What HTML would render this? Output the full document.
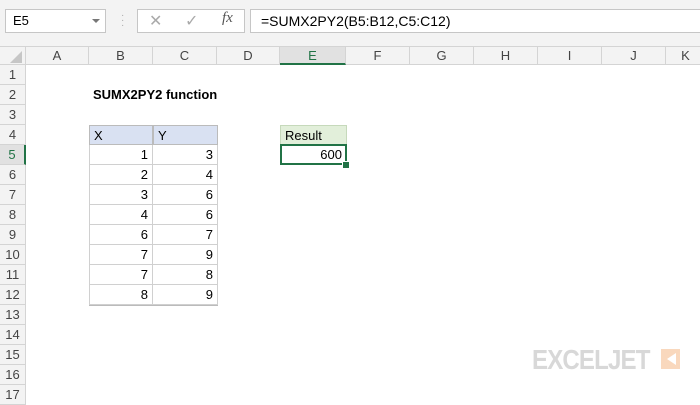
<!DOCTYPE html><html><head><style>
body{margin:0;width:700px;height:400px;overflow:hidden;background:#fff;font-family:"Liberation Sans",Arial,sans-serif;font-size:13px;position:relative}
.a{position:absolute}
.ch{position:absolute;top:47px;height:18px;background:#f3f3f3;border-right:1px solid #d4d4d4;border-bottom:1px solid #d4d4d4;text-align:center;line-height:18px;color:#444;box-sizing:border-box}
.rh{position:absolute;left:0;width:26px;height:20px;background:#f3f3f3;border-bottom:1px solid #d4d4d4;border-right:1px solid #d4d4d4;box-sizing:border-box;text-align:center;line-height:20px;color:#444}
.c{position:absolute;height:20px;line-height:20px;box-sizing:border-box;padding:0 4px}
</style></head><body>
<div class="a" style="left:0;top:0;width:700px;height:46px;background:#f3f3f3;border-bottom:1px solid #d4d4d4"></div>
<div class="a" style="left:5px;top:9px;width:101px;height:24px;background:#fff;border:1px solid #c6c6c6;box-sizing:border-box;line-height:22px;padding-left:7px">E5</div>
<div class="a" style="left:92px;top:19px;border-left:4px solid transparent;border-right:4px solid transparent;border-top:4px solid #777"></div>
<div class="a" style="left:121px;top:13px;color:#aaa;font-size:10px;line-height:5px">·<br>·<br>·</div>
<div class="a" style="left:137px;top:9px;width:108px;height:24px;background:#fff;border:1px solid #c6c6c6;box-sizing:border-box"></div>
<div class="a" style="left:149px;top:11px;color:#aaa;font-size:16px">✕</div>
<div class="a" style="left:185px;top:11px;color:#aaa;font-size:16px">✓</div>
<div class="a" style="left:222px;top:10px;color:#555;font-style:italic;font-family:'Liberation Serif',serif;font-size:15px">fx</div>
<div class="a" style="left:250px;top:9px;width:460px;height:24px;background:#fff;border:1px solid #c6c6c6;box-sizing:border-box;line-height:22px;padding-left:10px;font-size:14px">=SUMX2PY2(B5:B12,C5:C12)</div>
<div class="ch" style="left:0;width:26px"></div>
<div class="a" style="left:10px;top:51px;border-left:12px solid transparent;border-bottom:12px solid #c6c6c6;width:0"></div>
<div class="ch" style="left:26px;width:63px">A</div>
<div class="ch" style="left:89px;width:64px">B</div>
<div class="ch" style="left:153px;width:64px">C</div>
<div class="ch" style="left:217px;width:63px">D</div>
<div class="ch" style="left:280px;width:66px;background:#e1e1e1;border-bottom:2px solid #217346;color:#217346">E</div>
<div class="ch" style="left:346px;width:64px">F</div>
<div class="ch" style="left:410px;width:64px">G</div>
<div class="ch" style="left:474px;width:64px">H</div>
<div class="ch" style="left:538px;width:64px">I</div>
<div class="ch" style="left:602px;width:64px">J</div>
<div class="ch" style="left:666px;width:40px">K</div>
<div class="rh" style="top:65px">1</div><div class="rh" style="top:85px">2</div><div class="rh" style="top:105px">3</div><div class="rh" style="top:125px">4</div>
<div class="rh" style="top:145px;background:#e1e1e1;border-right:2px solid #217346;color:#217346">5</div>
<div class="rh" style="top:165px">6</div><div class="rh" style="top:185px">7</div><div class="rh" style="top:205px">8</div><div class="rh" style="top:225px">9</div><div class="rh" style="top:245px">10</div><div class="rh" style="top:265px">11</div><div class="rh" style="top:285px">12</div><div class="rh" style="top:305px">13</div><div class="rh" style="top:325px">14</div><div class="rh" style="top:345px">15</div><div class="rh" style="top:365px">16</div><div class="rh" style="top:385px">17</div>
<div class="c" style="left:89px;top:85px;font-weight:bold">SUMX2PY2 function</div>
<div class="a" style="left:89px;top:125px;width:129px;height:181px;border:1px solid #bbb;box-sizing:border-box"></div>
<div class="c" style="left:89px;top:125px;width:64px;background:#d9e1f2;border:1px solid #bbb">X</div>
<div class="c" style="left:153px;top:125px;width:65px;background:#d9e1f2;border:1px solid #bbb">Y</div>
<div id="t"></div>
<script>
var d=[[1,3],[2,4],[3,6],[4,6],[6,7],[7,9],[7,8],[8,9]],h='';
d.forEach(function(r,i){var y=145+i*20;h+='<div class="c" style="left:89px;top:'+y+'px;width:64px;border:1px solid #d0d0d0;border-top:0;text-align:right">'+r[0]+'</div><div class="c" style="left:153px;top:'+y+'px;width:65px;border:1px solid #d0d0d0;border-top:0;border-left:0;text-align:right">'+r[1]+'</div>';});
document.getElementById('t').innerHTML=h;
</script>
<div class="c" style="left:280px;top:125px;width:67px;background:#e2efda;border:1px solid #c6d9bb">Result</div>
<div class="c" style="left:280px;top:144px;width:67px;height:21px;border:2px solid #217346;text-align:right;line-height:17px;padding-right:3px">600</div>
<div class="a" style="left:342px;top:161px;width:6px;height:6px;background:#217346;border:1px solid #fff"></div>
<div class="a" style="left:532px;top:344px;font-size:28px;font-weight:bold;color:#d8d8d8;letter-spacing:-1px;transform:scaleX(0.86);transform-origin:left top;white-space:nowrap">EXCELJET</div>
<div class="a" style="left:661px;top:349px;width:19px;height:20px;background:#f9d8bd"></div>
<div class="a" style="left:667px;top:353px;border-right:9px solid #fff;border-top:6px solid transparent;border-bottom:6px solid transparent"></div>
</body></html>
